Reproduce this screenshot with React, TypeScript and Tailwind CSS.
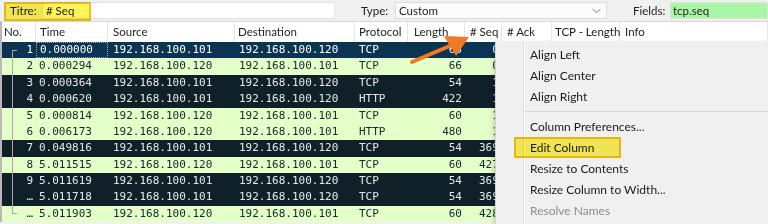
import React from 'react';

const A = '192.168.100.101';
const B = '192.168.100.120';

type Row = {
  no: string;
  time: string;
  src: string;
  dst: string;
  proto: string;
  len: string;
  seq: string;
  kind: 'sel' | 'dark' | 'light';
};

const rows: Row[] = [
  { no: '1', time: '0.000000', src: A, dst: B, proto: 'TCP', len: '66', seq: '  0', kind: 'sel' },
  { no: '2', time: '0.000294', src: B, dst: A, proto: 'TCP', len: '66', seq: '  0', kind: 'light' },
  { no: '3', time: '0.000364', src: A, dst: B, proto: 'TCP', len: '54', seq: '  1', kind: 'dark' },
  { no: '4', time: '0.000620', src: A, dst: B, proto: 'HTTP', len: '422', seq: '  1', kind: 'dark' },
  { no: '5', time: '0.000814', src: B, dst: A, proto: 'TCP', len: '60', seq: '  1', kind: 'light' },
  { no: '6', time: '0.006173', src: B, dst: A, proto: 'HTTP', len: '480', seq: '  1', kind: 'light' },
  { no: '7', time: '0.049816', src: A, dst: B, proto: 'TCP', len: '54', seq: '369', kind: 'dark' },
  { no: '8', time: '5.011515', src: B, dst: A, proto: 'TCP', len: '60', seq: '427', kind: 'light' },
  { no: '9', time: '5.011619', src: A, dst: B, proto: 'TCP', len: '54', seq: '369', kind: 'dark' },
  { no: '…', time: '5.011718', src: A, dst: B, proto: 'TCP', len: '54', seq: '369', kind: 'dark' },
  { no: '…', time: '5.011903', src: B, dst: A, proto: 'TCP', len: '60', seq: '428', kind: 'light' },
];

const rowClass = {
  sel: 'bg-[#0b3452] text-white',
  dark: 'bg-[#0f2029] text-[#e8e8e8]',
  light: 'bg-[#e4ffc7] text-[#12272e]',
};

const ui = "font-['Lato',sans-serif] text-[11.5px]";

function TopBar() {
  return (
    <div className={`flex h-[22px] items-center bg-[#f0f0f0] border-b border-[#d8d8d8] ${ui} text-[#1e1e1e]`}>
      <span className="w-[42px] pl-[10px]">Titre:</span>
      <div className="h-[17px] w-[293px] bg-white border border-[#e3e3e3] pl-[3px] leading-[15px]"># Seq</div>
      <span className="w-[60px] pl-[26px]">Type:</span>
      <div className="flex h-[17px] w-[212px] items-center justify-between bg-[#fbfbfb] border border-[#dcdcdc] pl-[3px] pr-[5px]">
        <span>Custom</span>
        <svg width="9" height="6" viewBox="0 0 9 6" fill="none" stroke="#7a7a7a" strokeWidth="1">
          <path d="M0.5 0.8 L4.5 4.8 L8.5 0.8" />
        </svg>
      </div>
      <span className="w-[63px] pl-[26px]">Fields:</span>
      <div className="h-[17px] flex-1 bg-[#a9f7a6] border border-[#d8e8d8] pl-[2px] leading-[15px]">tcp.seq</div>
    </div>
  );
}

const cols = [
  { name: 'No.', w: 'w-[34px]', pl: 'pl-[2px]' },
  { name: 'Time', w: 'w-[72px]', pl: 'pl-[4px]' },
  { name: 'Source', w: 'w-[127px]', pl: 'pl-[5px]' },
  { name: 'Destination', w: 'w-[120px]', pl: 'pl-[3px]' },
  { name: 'Protocol', w: 'w-[53px]', pl: 'pl-[4px]' },
  { name: 'Length', w: 'w-[57px]', pl: 'pl-[6px]' },
  { name: '# Seq', w: 'w-[37px]', pl: 'pl-[5px]' },
  { name: '# Ack', w: 'w-[50px]', pl: 'pl-[5px]' },
  { name: 'TCP - Length', w: 'w-[68px]', pl: 'pl-[3px]' },
  { name: 'Info', w: 'flex-1', pl: 'pl-[5px]' },
];

function Header() {
  return (
    <div className={`flex h-[20px] items-center bg-white ${ui} text-[#1e1e1e]`}>
      {cols.map((c) => (
        <div
          key={c.name}
          className={`${c.w} ${c.pl} h-full flex items-center whitespace-nowrap border-r border-[#e5e5e5]`}
        >
          {c.name}
        </div>
      ))}
    </div>
  );
}

function TreeMark({ i }: { i: number }) {
  const first = i === 0;
  const last = i === rows.length - 1;
  return (
    <span
      className={`absolute left-[10px] w-[5px] border-l border-[#a8a8a8] ${
        first ? 'top-[8px] bottom-0 border-t' : last ? 'top-0 h-[8px] border-b' : 'top-0 bottom-0'
      }`}
    />
  );
}

function PacketRow({ r, i }: { r: Row; i: number }) {
  return (
    <div className={`flex h-[16.4px] items-center whitespace-pre ${rowClass[r.kind]}`}>
      <div className="relative w-[34px] h-full flex items-center justify-end pr-[3px]">
        <TreeMark i={i} />
        {r.no}
      </div>
      <div
        className={`w-[72px] h-full flex items-center pl-[3px] ${
          r.kind === 'sel' ? 'border border-dotted border-[#9aa7b3]' : ''
        }`}
      >
        {r.time}
      </div>
      <div className="w-[127px] pl-[5px]">{r.src}</div>
      <div className="w-[120px] pl-[4px]">{r.dst}</div>
      <div className="w-[53px] pl-[4px]">{r.proto}</div>
      <div className="w-[57px] pr-[3px] text-right">{r.len}</div>
      <div className="w-[37px] pl-[14px] overflow-hidden">{r.seq}</div>
    </div>
  );
}

function ContextMenu() {
  const top = ['Align Left', 'Align Center', 'Align Right'];
  const bottom = ['Column Preferences...', 'Edit Column', 'Resize to Contents', 'Resize Column to Width...'];
  return (
    <div className={`absolute left-[495px] top-[41px] right-0 bottom-0 flex bg-[#f0f0f0] border-l border-[#d4d4d4] shadow-[-2px_2px_4px_rgba(0,0,0,0.15)] ${ui} text-[12px] text-[#1a1a1a]`}>
      <div className="w-[27px] shrink-0" />
      <div className="w-[1px] bg-[#dedede]" />
      <div className="w-[1px] bg-white" />
      <div className="relative flex-1 pt-[3px]">
        {top.map((t) => (
          <div key={t} className="h-[21px] flex items-center pl-[5px]">{t}</div>
        ))}
        <div className="h-[9px] flex items-center">
          <div className="w-full border-t border-[#d7d7d7]" />
        </div>
        {bottom.map((t) => (
          <div key={t} className="h-[21px] flex items-center pl-[5px]">{t}</div>
        ))}
        <div className="h-[21px] flex items-center pl-[5px] text-[#8c8c8c]">Resolve Names</div>
        <div className="absolute left-[-11px] top-[96px] w-[107px] h-[21px] bg-[#fff35a] mix-blend-multiply border-2 border-[#f2c21b] rounded-[1px]" />
      </div>
    </div>
  );
}

export default function App() {
  return (
    <div className="relative isolate w-[768px] h-[224px] overflow-hidden bg-[#f0f0f0]">
      <TopBar />
      <div className="border-l-2 border-[#b8b8b8]">
        <Header />
        <div className="font-['DejaVu_Sans_Mono',monospace] text-[11px]">
          {rows.map((r, i) => (
            <PacketRow key={i} r={r} i={i} />
          ))}
        </div>
      </div>
      {/* annotation: Titre highlight */}
      <div className="absolute left-[4px] top-[2px] w-[87px] h-[19px] bg-[#fff35a] mix-blend-multiply border-2 border-[#f2c21b] rounded-[1px]" />
      <ContextMenu />
      {/* annotation: orange arrow */}
      <svg className="absolute left-0 top-0" width="768" height="224" viewBox="0 0 768 224">
        <line x1="412" y1="62" x2="452" y2="45" stroke="#f07a21" strokeWidth="4" strokeLinecap="round" />
        <polygon points="469,37 444,36 456,56" fill="#f07a21" />
      </svg>
    </div>
  );
}
